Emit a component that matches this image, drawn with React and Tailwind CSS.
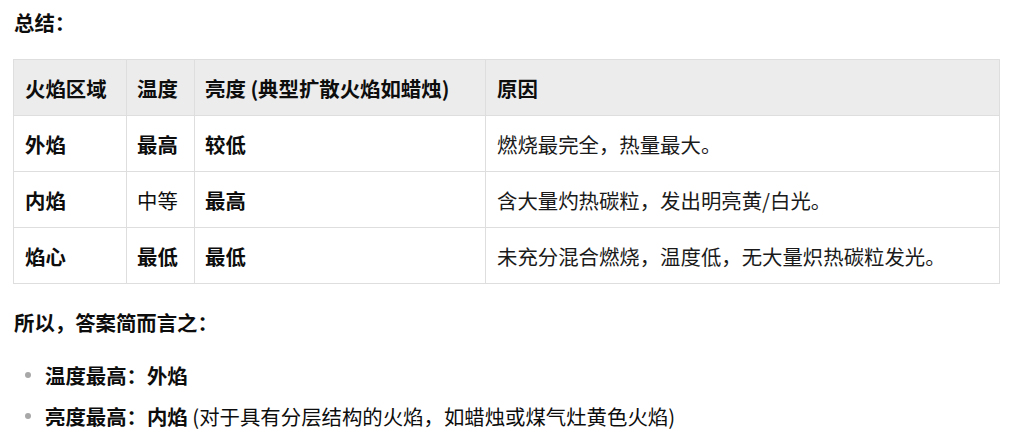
import React from "react";

const rows = [
  { zone: "外焰", temp: "最高", tempBold: true, bright: "较低", reason: "燃烧最完全，热量最大。" },
  { zone: "内焰", temp: "中等", tempBold: false, bright: "最高", reason: "含大量灼热碳粒，发出明亮黄/白光。" },
  { zone: "焰心", temp: "最低", tempBold: true, bright: "最低", reason: "未充分混合燃烧，温度低，无大量炽热碳粒发光。" },
];

const App = () => {
  return (
    <div
      className="w-[1017px] h-[438px] overflow-hidden bg-white text-[#0d0d0d] text-[20.4px] leading-[30px]"
      style={{ fontFamily: '"Noto Sans CJK SC", "Noto Sans", sans-serif' }}
    >
      <p className="pl-[14px] pt-[7px] font-bold">总结：</p>

      <table className="ml-[13px] mt-[22px] border-collapse w-[987px] table-fixed">
        <colgroup>
          <col className="w-[113px]" />
          <col className="w-[68px]" />
          <col className="w-[291px]" />
          <col />
        </colgroup>
        <thead>
          <tr className="bg-[#ececec] h-[56px]">
            <th className="border border-[#dedede] px-[11px] text-left font-bold">火焰区域</th>
            <th className="border border-[#dedede] px-[10px] text-left font-bold">温度</th>
            <th className="border border-[#dedede] px-[10px] text-left font-bold whitespace-nowrap">亮度 (典型扩散火焰如蜡烛)</th>
            <th className="border border-[#dedede] px-[11px] text-left font-bold">原因</th>
          </tr>
        </thead>
        <tbody>
          {rows.map((r) => (
            <tr key={r.zone} className="h-[56px]">
              <td className="border border-[#dedede] px-[11px] font-bold">{r.zone}</td>
              <td className={"border border-[#dedede] px-[10px] " + (r.tempBold ? "font-bold" : "font-normal")}>{r.temp}</td>
              <td className="border border-[#dedede] px-[10px] font-bold">{r.bright}</td>
              <td className="border border-[#dedede] px-[11px] text-[#1a1a1a]">{r.reason}</td>
            </tr>
          ))}
        </tbody>
      </table>

      <p className="pl-[14px] mt-[23px] font-bold">所以，答案简而言之：</p>

      <ul className="mt-[23px] flex flex-col gap-[11px]">
        <li className="flex items-center">
          <span className="ml-[25px] mr-[14px] w-[6px] h-[6px] rounded-full bg-[#a8a8a8]" />
          <span className="font-bold">温度最高：外焰</span>
        </li>
        <li className="flex items-center">
          <span className="ml-[25px] mr-[14px] w-[6px] h-[6px] rounded-full bg-[#a8a8a8]" />
          <span>
            <span className="font-bold">亮度最高：内焰</span> (对于具有分层结构的火焰，如蜡烛或煤气灶黄色火焰)
          </span>
        </li>
      </ul>
    </div>
  );
};

export default App;
